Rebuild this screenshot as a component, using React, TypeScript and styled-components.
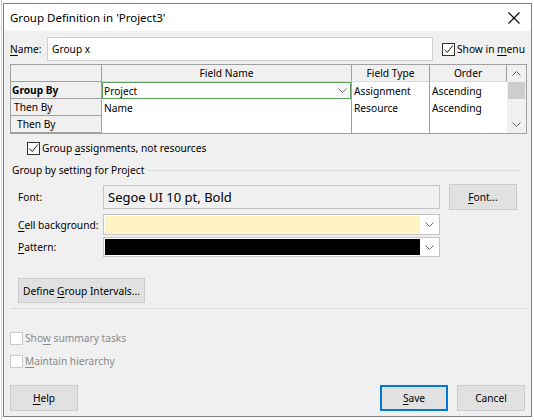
import React from 'react';
import styled, { createGlobalStyle } from 'styled-components';

const GlobalStyle = createGlobalStyle`
  html, body {
    margin: 0;
    padding: 0;
    background: #ffffff;
  }
  body {
    font-family: 'Noto Sans', 'Liberation Sans', sans-serif;
    font-size: 10.2px;
    color: #000;
  }
`;

const Backdrop = styled.div`
  width: 534px;
  height: 420px;
  box-sizing: border-box;
  padding: 3px 2px 3px 3px;
  background-color: #ffffff;
  background-image: linear-gradient(90deg, transparent 1px, #d4d4d4 1px, #d4d4d4 2px, transparent 2px);
`;

const Window = styled.div`
  height: 100%;
  box-sizing: border-box;
  display: flex;
  flex-direction: column;
  border: 1px solid #7f7f7f;
  background: #f0f0f0;
`;

const TitleBar = styled.div`
  height: 27px;
  flex: none;
  display: flex;
  align-items: center;
  justify-content: space-between;
  padding: 0 10px 0 6px;
  background: #ffffff;
  font-size: 11.5px;
`;

const CloseButton = styled.button`
  width: 14px;
  height: 14px;
  padding: 0;
  border: 0;
  background: none;
  display: flex;
  align-items: center;
  justify-content: center;
`;

const Body = styled.div`
  flex: 1;
  display: flex;
  flex-direction: column;
  padding: 0 4px 0 6px;
`;

const NameRow = styled.div`
  margin-top: 6px;
  height: 24px;
  display: flex;
  align-items: center;
`;

const Label = styled.label<{ $width?: number; $disabled?: boolean }>`
  flex: none;
  width: ${({ $width }) => ($width ? `${$width}px` : 'auto')};
  color: ${({ $disabled }) => ($disabled ? '#8a8a8a' : '#000')};
  white-space: nowrap;
`;

const TextInput = styled.div`
  width: 386px;
  height: 24px;
  box-sizing: border-box;
  border: 1px solid #cfcfcf;
  background: #fff;
  padding: 4px 4px;
`;

const CheckRow = styled.div<{ $top: number; $indent?: number }>`
  margin-top: ${({ $top }) => $top}px;
  margin-left: ${({ $indent }) => $indent || 0}px;
  height: 14px;
  display: flex;
  align-items: center;
  gap: 2px;
  white-space: nowrap;
`;

const Box = styled.span<{ $disabled?: boolean }>`
  width: 13px;
  height: 13px;
  box-sizing: border-box;
  flex: none;
  border: 1px solid ${({ $disabled }) => ($disabled ? '#cccccc' : '#333333')};
  background: #fff;
  display: flex;
  align-items: center;
  justify-content: center;
`;

const Table = styled.div`
  margin-top: 3px;
  width: 517px;
  box-sizing: border-box;
  border: 1px solid #a0a0a0;
  display: grid;
  grid-template-columns: 91px 250px 78px 77px 19px;
  grid-template-rows: 17px 17px 17px 17px;
  background: #fff;
`;

const HeadCell = styled.div`
  background: #f0f0f0;
  border-right: 1px solid #a0a0a0;
  border-bottom: 1px solid #d9d9d9;
  display: flex;
  align-items: center;
  justify-content: center;
  line-height: 1;
  &:first-child {
    border-bottom-color: #a0a0a0;
  }
`;

const RowHead = styled.div<{ $indent: number; $bold?: boolean }>`
  background: #f0f0f0;
  border-right: 1px solid #a0a0a0;
  border-bottom: 1px solid #a0a0a0;
  display: flex;
  align-items: center;
  padding-left: ${({ $indent }) => $indent}px;
  font-weight: ${({ $bold }) => ($bold ? 700 : 400)};
`;

const Cell = styled.div<{ $selected?: boolean; $last?: boolean }>`
  position: relative;
  display: flex;
  align-items: center;
  padding-left: 2px;
  border-right: ${({ $last }) => ($last ? 'none' : '1px solid #a0a0a0')};
  box-shadow: ${({ $selected }) => ($selected ? 'inset 0 0 0 1px #5e9d5e' : 'none')};
`;

const CellArrow = styled.span`
  position: absolute;
  right: 2px;
  top: 2px;
  bottom: 2px;
  width: 13px;
  background: #f4f4f4;
  display: flex;
  align-items: center;
  justify-content: center;
`;

const ScrollBar = styled.div`
  grid-column: 5;
  grid-row: 1 / -1;
  background: #f0f0f0;
  display: flex;
  flex-direction: column;
  align-items: center;
  padding: 0 1px;
`;

const ScrollArrow = styled.div`
  height: 17px;
  width: 100%;
  display: flex;
  align-items: center;
  justify-content: center;
`;

const ScrollTrack = styled.div`
  flex: 1;
`;

const Thumb = styled.div`
  width: 100%;
  height: 17px;
  background: #cdcdcd;
`;

const SectionHeader = styled.div`
  margin-top: 7px;
  height: 16px;
  display: flex;
  align-items: center;
  gap: 4px;
  padding-left: 2px;
  white-space: nowrap;
  &::after {
    content: '';
    flex: 1;
    height: 1px;
    background: #dcdcdc;
    margin-right: 6px;
  }
`;

const FormRow = styled.div<{ $top: number; $height: number }>`
  margin-top: ${({ $top }) => $top}px;
  height: ${({ $height }) => $height}px;
  display: flex;
  align-items: center;
  padding-left: 8px;
`;

const ReadOnlyBox = styled.div`
  width: 337px;
  height: 24px;
  box-sizing: border-box;
  border: 1px solid #c4c4c4;
  background: #f0f0f0;
  display: flex;
  align-items: center;
  padding-left: 4px;
  font-size: 13px;
`;

const ColorCombo = styled.div`
  width: 337px;
  height: 100%;
  box-sizing: border-box;
  border: 1px solid #c4c4c4;
  background: #fff;
  display: flex;
  padding: 1px;
`;

const Swatch = styled.div<{ $color: string }>`
  flex: 1;
  background: ${({ $color }) => $color};
`;

const ComboArrow = styled.div`
  width: 18px;
  display: flex;
  align-items: center;
  justify-content: center;
`;

const Button = styled.button<{ $width: number; $default?: boolean }>`
  width: ${({ $width }) => $width}px;
  height: 26px;
  flex: none;
  box-sizing: border-box;
  border: 1px solid ${({ $default }) => ($default ? '#0078d7' : '#cccccc')};
  box-shadow: ${({ $default }) => ($default ? 'inset 0 0 0 1px #0078d7' : 'none')};
  background: #e1e1e1;
  font-family: inherit;
  font-size: 10.2px;
  color: #000;
  padding: 0;
  white-space: nowrap;
`;

const FontButton = styled(Button)`
  margin-left: 9px;
`;

const IntervalsButton = styled(Button)`
  margin-top: 21px;
  margin-left: 8px;
  height: 25px;
`;

const Separator = styled.div`
  margin-top: 5px;
  height: 1px;
  background: #dcdcdc;
`;

const Footer = styled.div`
  margin-top: 17px;
  display: flex;
  align-items: center;
  justify-content: space-between;
  padding-right: 2px;
`;

const ButtonGroup = styled.div`
  display: flex;
  gap: 9px;
`;

const Key = styled.span`
  text-decoration: underline;
  text-underline-offset: 2px;
`;

function Chevron({ up, color = '#606060' }: { up?: boolean; color?: string }) {
  return (
    <svg width="9" height="5" viewBox="0 0 9 5">
      <path
        d={up ? 'M0.5 4.5 L4.5 0.5 L8.5 4.5' : 'M0.5 0.5 L4.5 4.5 L8.5 0.5'}
        fill="none"
        stroke={color}
        strokeWidth="1"
      />
    </svg>
  );
}

function CheckMark() {
  return (
    <svg width="11" height="11" viewBox="0 0 11 11">
      <path d="M1.5 5.5 L4.2 8.5 L9.8 1.5" fill="none" stroke="#222" strokeWidth="1" />
    </svg>
  );
}

function Checkbox({ checked, disabled }: { checked?: boolean; disabled?: boolean }) {
  return <Box $disabled={disabled}>{checked && <CheckMark />}</Box>;
}

const rows = [
  { head: 'Group By', indent: 1, bold: true, field: 'Project', type: 'Assignment', order: 'Ascending' },
  { head: 'Then By', indent: 3, field: 'Name', type: 'Resource', order: 'Ascending' },
  { head: 'Then By', indent: 6, field: '', type: '', order: '' }
];

export default function App() {
  return (
    <>
      <GlobalStyle />
      <Backdrop>
        <Window>
          <TitleBar>
            <span>Group Definition in 'Project3'</span>
            <CloseButton aria-label="Close">
              <svg width="12" height="12" viewBox="0 0 12 12">
                <path d="M0.5 0.5 L11.5 11.5 M11.5 0.5 L0.5 11.5" stroke="#000" strokeWidth="1.1" />
              </svg>
            </CloseButton>
          </TitleBar>
          <Body>
            <NameRow>
              <Label $width={37}>
                <Key>N</Key>ame:
              </Label>
              <TextInput>Group x</TextInput>
              <CheckRow $top={0} $indent={9}>
                <Checkbox checked />
                <span>
                  Show in <Key>m</Key>enu
                </span>
              </CheckRow>
            </NameRow>

            <Table>
              <HeadCell />
              <HeadCell>Field Name</HeadCell>
              <HeadCell>Field Type</HeadCell>
              <HeadCell>Order</HeadCell>
              <ScrollBar>
                <ScrollArrow>
                  <Chevron up />
                </ScrollArrow>
                <Thumb />
                <ScrollTrack />
                <ScrollArrow>
                  <Chevron />
                </ScrollArrow>
              </ScrollBar>
              {rows.map((r, i) => (
                <React.Fragment key={i}>
                  <RowHead $indent={r.indent} $bold={r.bold}>
                    {r.head}
                  </RowHead>
                  <Cell $selected={i === 0}>
                    {r.field}
                    {i === 0 && (
                      <CellArrow>
                        <Chevron color="#777" />
                      </CellArrow>
                    )}
                  </Cell>
                  <Cell>{r.type}</Cell>
                  <Cell $last>{r.order}</Cell>
                </React.Fragment>
              ))}
            </Table>

            <CheckRow $top={7} $indent={17}>
              <Checkbox checked />
              <span>
                Group <Key>a</Key>ssignments, not resources
              </span>
            </CheckRow>

            <SectionHeader>Group by setting for Project</SectionHeader>

            <FormRow $top={6} $height={26}>
              <Label $width={85}>Font:</Label>
              <ReadOnlyBox>Segoe UI 10 pt, Bold</ReadOnlyBox>
              <FontButton $width={68}>
                <Key>F</Key>ont...
              </FontButton>
            </FormRow>
            <FormRow $top={4} $height={21}>
              <Label $width={85}>
                <Key>C</Key>ell background:
              </Label>
              <ColorCombo>
                <Swatch $color="#fff4c1" />
                <ComboArrow>
                  <Chevron color="#666" />
                </ComboArrow>
              </ColorCombo>
            </FormRow>
            <FormRow $top={2} $height={20}>
              <Label $width={85}>
                <Key>P</Key>attern:
              </Label>
              <ColorCombo>
                <Swatch $color="#000000" />
                <ComboArrow>
                  <Chevron color="#666" />
                </ComboArrow>
              </ColorCombo>
            </FormRow>

            <IntervalsButton $width={127}>
              Define <Key>G</Key>roup Intervals...
            </IntervalsButton>

            <Separator />

            <CheckRow $top={22}>
              <Checkbox disabled />
              <Label $disabled>
                Sho<Key>w</Key> summary tasks
              </Label>
            </CheckRow>
            <CheckRow $top={9}>
              <Checkbox disabled />
              <Label $disabled>
                <Key>M</Key>aintain hierarchy
              </Label>
            </CheckRow>

            <Footer>
              <Button $width={68}>
                <Key>H</Key>elp
              </Button>
              <ButtonGroup>
                <Button $width={68} $default>
                  <Key>S</Key>ave
                </Button>
                <Button $width={68}>Cancel</Button>
              </ButtonGroup>
            </Footer>
          </Body>
        </Window>
      </Backdrop>
    </>
  );
}
